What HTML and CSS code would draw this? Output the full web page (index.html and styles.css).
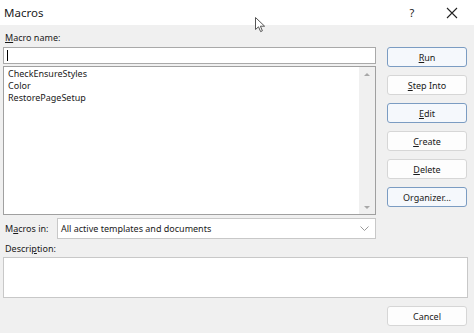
FILE: index.html
```html
<!DOCTYPE html>
<html lang="en">
  <head>
    <meta charset="UTF-8">
    <title>Macros</title>
    <link rel="stylesheet" href="styles.css">
  </head>
  <body>
    <div class="titlebar">
      <span class="title">Macros</span>
      <span class="help">?</span>
      <span class="close">
        <svg width="12" height="12" viewBox="0 0 12 12"><path d="M1 1 L11 11 M11 1 L1 11" stroke="#222" stroke-width="1.1" fill="none"/></svg>
      </span>
    </div>
    <!-- mouse pointer captured in the shot -->
    <svg class="pointer" width="11" height="16" viewBox="0 0 11 16"><path d="M0.5 0.5 L0.5 12.5 L3.5 9.8 L5.6 14.6 L7.4 13.8 L5.4 9.2 L9.6 9.2 Z" fill="#fff" stroke="#555" stroke-width="1"/></svg>
    <div class="dialog">
      <div class="top">
        <div class="left">
          <div class="label"><u>M</u>acro name:</div>
          <div class="input"><span class="caret"></span></div>
          <div class="list">
            <ul class="items">
              <li>CheckEnsureStyles</li>
              <li>Color</li>
              <li>RestorePageSetup</li>
            </ul>
            <div class="scrollbar">
              <span class="arrow up"></span>
              <span class="arrow down"></span>
            </div>
          </div>
        </div>
        <div class="buttons">
          <button class="btn primary"><u>R</u>un</button>
          <button class="btn"><u>S</u>tep Into</button>
          <button class="btn primary"><u>E</u>dit</button>
          <button class="btn"><u>C</u>reate</button>
          <button class="btn"><u>D</u>elete</button>
          <button class="btn primary">Organizer...</button>
        </div>
      </div>
      <div class="macros-in">
        <span class="label">M<u>a</u>cros in:</span>
        <div class="select">
          <span>All active templates and documents</span>
          <svg width="9" height="5" viewBox="0 0 9 5"><path d="M0.5 0.5 L4.5 4.5 L8.5 0.5" stroke="#999" fill="none"/></svg>
        </div>
      </div>
      <div class="label">Descri<u>p</u>tion:</div>
      <div class="description"></div>
      <div class="footer">
        <button class="btn">Cancel</button>
      </div>
    </div>
  </body>
</html>
```
FILE: styles.css
```css
body {
  margin: 0;
  font-family: "Noto Sans", "Open Sans", sans-serif;
  font-size: 9px;
  color: #1a1a1a;
  background-color: #f0f0f0;
}

.titlebar {
  height: 25px;
  background-color: #ffffff;
  display: flex;
  align-items: center;
  padding-left: 4px;
}

.title {
  font-size: 11.5px;
  flex: 1;
}

.help {
  font-size: 11px;
  width: 14px;
  text-align: center;
  margin-right: 27px;
}

.close {
  display: flex;
  margin-right: 16px;
}

.pointer {
  position: absolute;
  left: 255px;
  top: 17px;
}

.dialog {
  padding: 6px 6px 0 3px;
}

.top {
  display: flex;
  gap: 11px;
}

.left {
  width: 373px;
}

.label {
  height: 14px;
  line-height: 14px;
  padding-left: 2px;
}

.input {
  height: 15px;
  margin-top: 2px;
  background-color: #ffffff;
  border: 1px solid #a9a9a9;
  display: flex;
  align-items: center;
  padding-left: 3px;
}

.caret {
  width: 1px;
  height: 11px;
  background-color: #000;
}

.list {
  margin-top: 2px;
  height: 147px;
  background-color: #ffffff;
  border: 1px solid #a0a0a0;
  display: flex;
}

.items {
  flex: 1;
  list-style: none;
  margin: 0;
  padding: 1px 0 0 4px;
}

.items li {
  height: 12px;
  line-height: 12px;
}

.scrollbar {
  width: 16px;
  background-color: #f0f0f0;
  display: flex;
  flex-direction: column;
  justify-content: space-between;
  align-items: center;
  padding: 6px 0 5px;
}

.arrow {
  width: 0;
  height: 0;
  border-left: 3px solid transparent;
  border-right: 3px solid transparent;
}

.arrow.up {
  border-bottom: 3px solid #a8a8a8;
}

.arrow.down {
  border-top: 3px solid #a8a8a8;
}

.buttons {
  width: 80px;
  display: flex;
  flex-direction: column;
  gap: 8px;
  padding-top: 16px;
}

.btn {
  width: 80px;
  height: 20px;
  padding: 0;
  font-family: inherit;
  font-size: 9px;
  color: #1a1a1a;
  background-color: #fdfdfd;
  border: 1px solid #d6d6d6;
  border-radius: 3px;
}

.btn.primary {
  background-color: #f5f8fc;
  border-color: #7b9cc2;
}

.macros-in {
  display: flex;
  align-items: center;
  margin-top: 3px;
  height: 21px;
  width: 373px;
}

.macros-in .label {
  width: 52px;
}

.select {
  flex: 1;
  height: 19px;
  background-color: #ffffff;
  border: 1px solid #c8c8c8;
  display: flex;
  align-items: center;
  justify-content: space-between;
  padding: 0 6px 0 3px;
}

.macros-in + .label {
  margin-top: 3px;
}

.description {
  margin-top: 1px;
  width: 463px;
  height: 39px;
  background-color: #ffffff;
  border: 1px solid #c8c8c8;
}

.footer {
  display: flex;
  justify-content: flex-end;
  padding: 8px 1px 0 0;
}
```
